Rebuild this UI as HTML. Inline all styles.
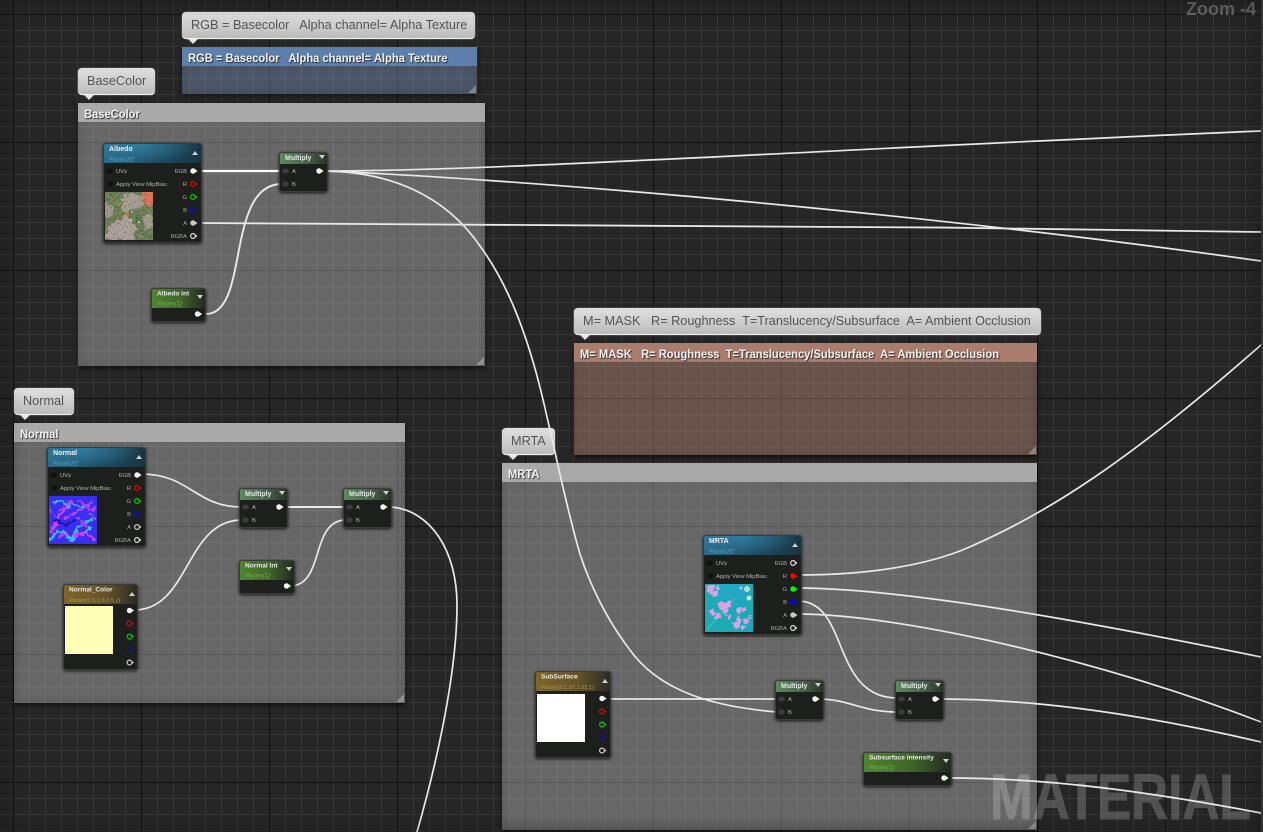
<!DOCTYPE html>
<html>
<head>
<meta charset="utf-8">
<style>
html,body{margin:0;padding:0;background:#262626}
#page{position:relative;width:1263px;height:832px;overflow:hidden;font-family:"Liberation Sans",sans-serif;
background-color:#262626;
background-image:
linear-gradient(to right,#131313 1px,transparent 1px),
linear-gradient(to bottom,#131313 1px,transparent 1px),
linear-gradient(to right,#353535 1px,transparent 1px),
linear-gradient(to bottom,#353535 1px,transparent 1px);
background-size:128px 128px,128px 128px,16px 16px,16px 16px;
background-position:13px 0,0 14px,13px 0,0 14px}
.c{position:absolute;box-sizing:border-box;z-index:1;box-shadow:0 2px 4px rgba(0,0,0,.65),inset 0 0 10px rgba(0,0,0,.15)}
.c .t{height:19px;padding:0 6px;font-weight:bold;font-size:12px;line-height:22px;color:#f2f2f2;text-shadow:1px 1px 1px #2c2c2c;white-space:pre;overflow:hidden}
.c .t span{display:inline-block;transform:scaleX(.93);transform-origin:0 50%}
.c i{position:absolute;right:1px;bottom:1px;width:0;height:0;border-left:8px solid transparent;border-bottom:8px solid rgba(255,255,255,.3)}
.gray{background:rgba(255,255,255,.3)}
.gray .t{background:#a9a9a9}
.b{position:absolute;box-sizing:border-box;z-index:1;height:27px;border-radius:4px;background:linear-gradient(#e0e0e0,#bcbcbc);border-bottom:1px solid #f4f4f4;box-shadow:0 0 1px #ddd;color:#545454;font-size:12.7px;line-height:26px;padding-left:9px;white-space:pre}
.b:after{content:"";position:absolute;left:6px;top:27px;width:0;height:0;border-left:5px solid transparent;border-right:5px solid transparent;border-top:5px solid #e4e4e4}
.n{position:absolute;box-sizing:border-box;z-index:3;background:#1d1f1d;border:1px solid #3a3c3a;border-radius:3px;box-shadow:0 1px 3px rgba(0,0,0,.8);overflow:hidden}
.h{height:19px;border-bottom:0}
.blue{background:radial-gradient(ellipse 70% 90% at 30% 10%,#2f7c9f,transparent),linear-gradient(90deg,#2a6a8a,#173440)}
.green{height:11px;background:linear-gradient(90deg,#5f8560,#4a684c 50%,#2b342b)}
.lime{background:linear-gradient(90deg,#4f8530,#3d6628 55%,#232823)}
.gold{background:linear-gradient(90deg,#7c6629,#665427 55%,#2c2b24)}
svg.o{position:absolute;left:0;top:0}
.w{position:absolute;z-index:5;font-weight:bold;white-space:pre;transform-origin:0 0}
#edge{position:absolute;inset:0;z-index:6;box-shadow:inset 0 0 22px rgba(0,0,0,.32);pointer-events:none}
#strip{position:absolute;left:1261px;top:0;width:2px;height:832px;background:#333;z-index:7}
</style>
</head>
<body>
<div id="page">

<!-- comment bubbles -->
<div class="b" style="left:182px;top:12px;width:293px">RGB = Basecolor   Alpha channel= Alpha Texture</div>
<div class="b" style="left:78px;top:68px;width:77px">BaseColor</div>
<div class="b" style="left:14px;top:388px;width:60px">Normal</div>
<div class="b" style="left:574px;top:308px;width:467px">M= MASK   R= Roughness  T=Translucency/Subsurface  A= Ambient Occlusion</div>
<div class="b" style="left:502px;top:428px;width:53px">MRTA</div>

<!-- comment boxes -->
<div class="c" style="left:182px;top:47px;width:295px;height:47px;background:rgba(158,198,255,.3)"><div class="t" style="background:#5d7fab"><span>RGB = Basecolor   Alpha channel= Alpha Texture</span></div><i></i></div>
<div class="c gray" style="left:78px;top:103px;width:407px;height:263px"><div class="t"><span>BaseColor</span></div><i></i></div>
<div class="c gray" style="left:14px;top:423px;width:391px;height:280px"><div class="t"><span>Normal</span></div><i></i></div>
<div class="c" style="left:574px;top:343px;width:463px;height:112px;background:rgba(255,188,160,.3)"><div class="t" style="background:#aa7c6c"><span>M= MASK   R= Roughness  T=Translucency/Subsurface  A= Ambient Occlusion</span></div><i></i></div>
<div class="c gray" style="left:502px;top:463px;width:535px;height:367px"><div class="t"><span>MRTA</span></div><i></i></div>

<!-- wires -->
<svg class="o" width="1263" height="832" style="z-index:2" fill="none" stroke="#e9e9e9" stroke-width="1.7" stroke-linecap="round">
<path d="M197 171L282 171" stroke-width="2.2" stroke="#fff"/>
<path d="M197 223C500 223,900 226,1261 232" stroke-width="1.8"/>
<path d="M206 314C250 314,225 184,282 184" stroke-width="1.9"/>
<path d="M325 171C500 171,850 148,1261 131"/>
<path d="M325 171C500 178,900 210,1261 261"/>
<path d="M325 171C390 172,445 195,480 246C505 280,528 330,547 417C556 455,567 510,580 554C590 585,607 620,630 650C660 692,715 707,778 712"/>
<path d="M141 474C190 474,195 507,242 507"/>
<path d="M134 610C190 610,185 520,242 520"/>
<path d="M287 507L346 507" stroke-width="2"/>
<path d="M290 586C325 586,310 520,346 520"/>
<path d="M391 507C430 510,457 550,457 605C457 680,432 780,417 832"/>
<path d="M797 575C860 575,915 568,960 551C1045 516,1130 460,1261 345"/>
<path d="M797 588C900 588,1080 620,1261 657"/>
<path d="M797 614C900 614,1100 660,1261 722"/>
<path d="M797 601C850 600,830 698,898 698"/>
<path d="M818 699C850 699,860 712,898 712"/>
<path d="M606 699L778 699"/>
<path d="M940 699C1040 699,1150 716,1261 742"/>
<path d="M948 778C1050 778,1150 792,1261 813"/>
</svg>

<!-- node bodies -->
<div class="n" style="left:103px;top:143px;width:99px;height:100px"><div class="h blue"></div></div>
<div class="n" style="left:47px;top:447px;width:99px;height:100px"><div class="h blue"></div></div>
<div class="n" style="left:703px;top:535px;width:99px;height:100px"><div class="h blue"></div></div>
<div class="n" style="left:279px;top:152px;width:49px;height:40px"><div class="h green"></div></div>
<div class="n" style="left:239px;top:488px;width:49px;height:40px"><div class="h green"></div></div>
<div class="n" style="left:343px;top:488px;width:49px;height:40px"><div class="h green"></div></div>
<div class="n" style="left:775px;top:680px;width:49px;height:40px"><div class="h green"></div></div>
<div class="n" style="left:895px;top:680px;width:49px;height:40px"><div class="h green"></div></div>
<div class="n" style="left:151px;top:288px;width:55px;height:34px"><div class="h lime"></div></div>
<div class="n" style="left:239px;top:560px;width:56px;height:34px"><div class="h lime"></div></div>
<div class="n" style="left:863px;top:752px;width:89px;height:34px"><div class="h lime"></div></div>
<div class="n" style="left:63px;top:584px;width:75px;height:86px"><div class="h gold"></div></div>
<div class="n" style="left:535px;top:671px;width:76px;height:87px"><div class="h gold"></div></div>

<!-- labels, pins, thumbnails -->
<svg class="o" width="1263" height="832" style="z-index:4;font-family:'Liberation Sans',sans-serif">
<defs>
<filter id="rough" x="0" y="0" width="100%" height="100%"><feTurbulence type="fractalNoise" baseFrequency=".22" numOctaves="2" seed="4"/><feDisplacementMap in="SourceGraphic" scale="7" xChannelSelector="R" yChannelSelector="G"/></filter>
<filter id="noise" x="0" y="0" width="100%" height="100%"><feTurbulence type="fractalNoise" baseFrequency=".55" numOctaves="2" seed="9"/><feColorMatrix values="1.6 0 0 0 -.3 1.6 0 0 0 -.3 1.6 0 0 0 -.3 0 0 0 0 1"/></filter>
<g id="pf"><circle r="2.7"/><path d="M2 -1.8L4.6 0L2 1.8Z"/></g>
<g id="po"><circle r="2.4" fill="none" stroke-width="1.2"/><path d="M2.6 -1.4L4.6 0L2.6 1.4Z" stroke="none"/></g>
<clipPath id="cl"><rect width="48" height="48"/></clipPath>
</defs>

<!-- swatches -->
<rect x="65" y="606" width="48" height="48" fill="#ffffb8"/>
<rect x="537" y="694" width="48" height="48" fill="#fff"/>

<!-- albedo thumbnail -->
<g transform="translate(105,192)" clip-path="url(#cl)">
<rect width="48" height="48" fill="#4a6632"/>
<g filter="url(#rough)">
<path d="M18 3L30 1L38 5L37 14L30 18L24 17L22 24L16 18Z" fill="#9c9080"/>
<path d="M6 32L16 27L22 22L28 30L32 36L28 42L30 48L0 48L2 38Z" fill="#a0958a"/>
<path d="M38 24L46 22L47 36L41 38Z" fill="#948c7e"/>
<path d="M-1 12L8 13L8 24L-1 24Z" fill="#928878"/>
<path d="M36 -2L50 -2L50 14L42 13L38 8Z" fill="#e25a36"/>
<path d="M10 8L16 9L15 14L9 13Z" fill="#5d7a3c"/>
<path d="M30 24L36 22L38 30L32 32Z" fill="#3e5c2a"/>
</g>
<rect width="48" height="48" filter="url(#noise)" opacity=".28"/>
<rect x="21" y="21" width="3" height="3" fill="#e2603a"/><rect x="12" y="25" width="2" height="2" fill="#c8683a"/><rect x="26" y="19" width="2" height="2" fill="#a8a08c"/><rect x="33" y="29" width="2" height="2" fill="#c8c0a8"/><rect x="7" y="6" width="2" height="2" fill="#d86038"/><rect x="42" y="18" width="3" height="2" fill="#d86038"/><rect x="34" y="43" width="3" height="3" fill="#d86a40"/><rect x="16" y="12" width="2" height="2" fill="#d86038"/><rect x="25" y="27" width="2" height="2" fill="#d0c8b0"/><rect x="14" y="20" width="2" height="1" fill="#c46a3c"/><rect x="36" y="19" width="2" height="2" fill="#c46a3c"/>
</g>

<!-- normal thumbnail -->
<g transform="translate(49,496)" clip-path="url(#cl)">
<rect width="48" height="48" fill="#3a2ff0"/>
<g filter="url(#rough)" fill="none" stroke-linecap="round">
<path d="M2 36L14 14L22 6" stroke="#d23ef0" stroke-width="3.5"/>
<path d="M0 44L10 34L24 44" stroke="#3cb8ff" stroke-width="3"/>
<path d="M22 46L30 30L42 24" stroke="#3cb8ff" stroke-width="2.5"/>
<path d="M16 22L28 16L44 6" stroke="#c040f0" stroke-width="2.5"/>
<path d="M26 40L36 36L46 44" stroke="#d83cf0" stroke-width="3"/>
<path d="M4 6L14 4L20 12" stroke="#38b8ff" stroke-width="2.5"/>
<path d="M30 4L40 14L47 12" stroke="#c43ef0" stroke-width="2.5"/>
<path d="M6 24L18 30L24 24" stroke="#2018b0" stroke-width="3"/>
<path d="M28 22L38 30" stroke="#a040f0" stroke-width="2.5"/>
<path d="M36 38L42 30" stroke="#48c8ff" stroke-width="2"/>
<path d="M0 14L8 22" stroke="#7a40f0" stroke-width="2.5"/>
<path d="M10 42L18 36" stroke="#d040f0" stroke-width="2"/>
<path d="M24 8L34 12" stroke="#40b0ff" stroke-width="2"/>
<path d="M40 18L46 22" stroke="#e040f0" stroke-width="2"/>
</g>
</g>

<!-- mrta thumbnail -->
<g transform="translate(705,584)" clip-path="url(#cl)">
<rect width="48" height="48" fill="#1caab8"/>
<rect x="14" y="0" width="26" height="16" fill="#22a8c4"/>
<path d="M2 46L20 24L30 14" stroke="#35c49a" stroke-width="1.5" fill="none"/>
<g filter="url(#rough)" fill="#d8a2e4">
<circle cx="5" cy="5" r="4"/><circle cx="13" cy="4" r="3"/><circle cx="10" cy="10" r="3"/>
<circle cx="18" cy="22" r="4.5"/><circle cx="24" cy="20" r="3"/><circle cx="21" cy="27" r="3"/>
<circle cx="7" cy="29" r="3"/><circle cx="13" cy="32" r="2"/><circle cx="34" cy="26" r="2.5"/><circle cx="39" cy="25" r="2"/>
<circle cx="31" cy="41" r="3.5"/><circle cx="34" cy="36" r="3"/><circle cx="42" cy="37" r="3"/><circle cx="24" cy="33" r="2.5"/>
<circle cx="38" cy="44" r="1.5"/><circle cx="45" cy="32" r="1.5"/>
</g>
<circle cx="42" cy="5" r="3" fill="#bfd8d0"/><circle cx="44" cy="14" r="2.5" fill="#c8e0d2"/><circle cx="36" cy="4" r="1.5" fill="#b0ccd8"/>
</g>

<!-- ALBEDO -->
<g transform="translate(103,143)">
<text x="6" y="8" font-size="7" font-weight="bold" fill="#f0f0f0">Albedo</text>
<text x="6" y="18.3" font-size="6" font-style="italic" fill="#5aa0bd">Param2D</text>
<path d="M89 12L92 8L95 12Z" fill="#cfcfcf"/>
<ellipse cx="7" cy="28" rx="3" ry="2.4" fill="#111"/><ellipse cx="7" cy="41" rx="3" ry="2.4" fill="#111"/>
<g font-size="5.8" fill="#b4b4b4"><text x="13" y="30">UVs</text><text x="13" y="43">Apply View MipBias</text></g>
<g font-size="5.8" fill="#a8a8a8" text-anchor="end"><text x="84" y="30">RGB</text><text x="84" y="43">R</text><text x="84" y="56">G</text><text x="84" y="69">B</text><text x="84" y="82">A</text><text x="84" y="95">RGBA</text></g>
<use href="#pf" x="90" y="28" fill="#fff"/>
<use href="#po" x="90" y="41" stroke="#e00" fill="#e00"/>
<use href="#po" x="90" y="54" stroke="#0c0" fill="#0c0"/>
<use href="#po" x="90" y="67" stroke="#11c" fill="#11c"/>
<use href="#pf" x="90" y="80" fill="#c8c8c8"/>
<use href="#po" x="90" y="93" stroke="#ddd" fill="#ddd"/>
</g>

<!-- NORMAL -->
<g transform="translate(47,447)">
<text x="6" y="8" font-size="7" font-weight="bold" fill="#f0f0f0">Normal</text>
<text x="6" y="18.3" font-size="6" font-style="italic" fill="#5aa0bd">Param2D</text>
<path d="M89 12L92 8L95 12Z" fill="#cfcfcf"/>
<ellipse cx="7" cy="28" rx="3" ry="2.4" fill="#111"/><ellipse cx="7" cy="41" rx="3" ry="2.4" fill="#111"/>
<g font-size="5.8" fill="#b4b4b4"><text x="13" y="30">UVs</text><text x="13" y="43">Apply View MipBias</text></g>
<g font-size="5.8" fill="#a8a8a8" text-anchor="end"><text x="84" y="30">RGB</text><text x="84" y="43">R</text><text x="84" y="56">G</text><text x="84" y="69">B</text><text x="84" y="82">A</text><text x="84" y="95">RGBA</text></g>
<use href="#pf" x="90" y="28" fill="#fff"/>
<use href="#po" x="90" y="41" stroke="#e00" fill="#e00"/>
<use href="#po" x="90" y="54" stroke="#0c0" fill="#0c0"/>
<use href="#po" x="90" y="67" stroke="#11c" fill="#11c"/>
<use href="#po" x="90" y="80" stroke="#ccc" fill="#ccc"/>
<use href="#po" x="90" y="93" stroke="#ddd" fill="#ddd"/>
</g>

<!-- MRTA -->
<g transform="translate(703,535)">
<text x="6" y="8" font-size="7" font-weight="bold" fill="#f0f0f0">MRTA</text>
<text x="6" y="18.3" font-size="6" font-style="italic" fill="#5aa0bd">Param2D</text>
<path d="M89 12L92 8L95 12Z" fill="#cfcfcf"/>
<ellipse cx="7" cy="28" rx="3" ry="2.4" fill="#111"/><ellipse cx="7" cy="41" rx="3" ry="2.4" fill="#111"/>
<g font-size="5.8" fill="#b4b4b4"><text x="13" y="30">UVs</text><text x="13" y="43">Apply View MipBias</text></g>
<g font-size="5.8" fill="#a8a8a8" text-anchor="end"><text x="84" y="30">RGB</text><text x="84" y="43">R</text><text x="84" y="56">G</text><text x="84" y="69">B</text><text x="84" y="82">A</text><text x="84" y="95">RGBA</text></g>
<use href="#po" x="90" y="28" stroke="#ddd" fill="#ddd"/>
<use href="#pf" x="90" y="41" fill="#f00"/>
<use href="#pf" x="90" y="54" fill="#0f0"/>
<use href="#pf" x="90" y="67" fill="#00e"/>
<use href="#pf" x="90" y="80" fill="#c8c8c8"/>
<use href="#po" x="90" y="93" stroke="#ddd" fill="#ddd"/>
</g>

<!-- MULTIPLY nodes -->
<g transform="translate(279,152)"><text x="6" y="8" font-size="7" font-weight="bold" fill="#e6e6e6">Multiply</text><path d="M40 3L46 3L43 7Z" fill="#cfcfcf"/><ellipse cx="6.5" cy="19" rx="3.3" ry="2.6" fill="#3c3c3c"/><ellipse cx="6.5" cy="32" rx="3.3" ry="2.6" fill="#3c3c3c"/><text x="13" y="21" font-size="5.8" fill="#b4b4b4">A</text><text x="13" y="34" font-size="5.8" fill="#b4b4b4">B</text><use href="#pf" x="40" y="19" fill="#fff"/></g>
<g transform="translate(239,488)"><text x="6" y="8" font-size="7" font-weight="bold" fill="#e6e6e6">Multiply</text><path d="M40 3L46 3L43 7Z" fill="#cfcfcf"/><ellipse cx="6.5" cy="19" rx="3.3" ry="2.6" fill="#3c3c3c"/><ellipse cx="6.5" cy="32" rx="3.3" ry="2.6" fill="#3c3c3c"/><text x="13" y="21" font-size="5.8" fill="#b4b4b4">A</text><text x="13" y="34" font-size="5.8" fill="#b4b4b4">B</text><use href="#pf" x="40" y="19" fill="#fff"/></g>
<g transform="translate(343,488)"><text x="6" y="8" font-size="7" font-weight="bold" fill="#e6e6e6">Multiply</text><path d="M40 3L46 3L43 7Z" fill="#cfcfcf"/><ellipse cx="6.5" cy="19" rx="3.3" ry="2.6" fill="#3c3c3c"/><ellipse cx="6.5" cy="32" rx="3.3" ry="2.6" fill="#3c3c3c"/><text x="13" y="21" font-size="5.8" fill="#b4b4b4">A</text><text x="13" y="34" font-size="5.8" fill="#b4b4b4">B</text><use href="#pf" x="40" y="19" fill="#fff"/></g>
<g transform="translate(775,680)"><text x="6" y="8" font-size="7" font-weight="bold" fill="#e6e6e6">Multiply</text><path d="M40 3L46 3L43 7Z" fill="#cfcfcf"/><ellipse cx="6.5" cy="19" rx="3.3" ry="2.6" fill="#3c3c3c"/><ellipse cx="6.5" cy="32" rx="3.3" ry="2.6" fill="#3c3c3c"/><text x="13" y="21" font-size="5.8" fill="#b4b4b4">A</text><text x="13" y="34" font-size="5.8" fill="#b4b4b4">B</text><use href="#pf" x="40" y="19" fill="#fff"/></g>
<g transform="translate(895,680)"><text x="6" y="8" font-size="7" font-weight="bold" fill="#e6e6e6">Multiply</text><path d="M40 3L46 3L43 7Z" fill="#cfcfcf"/><ellipse cx="6.5" cy="19" rx="3.3" ry="2.6" fill="#3c3c3c"/><ellipse cx="6.5" cy="32" rx="3.3" ry="2.6" fill="#3c3c3c"/><text x="13" y="21" font-size="5.8" fill="#b4b4b4">A</text><text x="13" y="34" font-size="5.8" fill="#b4b4b4">B</text><use href="#pf" x="40" y="19" fill="#fff"/></g>

<!-- scalar params -->
<g transform="translate(151,288)"><text x="6" y="7.5" font-size="6.6" font-weight="bold" fill="#e8e8e8">Albedo Int</text><text x="6" y="17.5" font-size="6" font-style="italic" fill="#78ae50">Param(1)</text><path d="M46 7L52 7L49 11Z" fill="#cfcfcf"/><use href="#pf" x="46.5" y="26" fill="#fff"/></g>
<g transform="translate(239,560)"><text x="6" y="7.5" font-size="6.6" font-weight="bold" fill="#e8e8e8">Normal Int</text><text x="6" y="17.5" font-size="6" font-style="italic" fill="#78ae50">Param(1)</text><path d="M47 7L53 7L50 11Z" fill="#cfcfcf"/><use href="#pf" x="47.5" y="26" fill="#fff"/></g>
<g transform="translate(863,752)"><text x="6" y="7.5" font-size="6.6" font-weight="bold" fill="#e8e8e8">Subsurface Intensity</text><text x="6" y="17.5" font-size="6" font-style="italic" fill="#78ae50">Param(1)</text><path d="M80 7L86 7L83 11Z" fill="#cfcfcf"/><use href="#pf" x="81" y="26" fill="#fff"/></g>

<!-- colour params -->
<g transform="translate(63,584)"><text x="6" y="7.5" font-size="6.6" font-weight="bold" fill="#e8e8e8">Normal_Color</text><text x="6" y="18" font-size="5.6" font-style="italic" fill="#a8945a">Param(1.5,1,5,0.5,1)</text><path d="M66 12L69 8L72 12Z" fill="#cfcfcf"/><use href="#pf" x="66.5" y="26.5" fill="#fff"/><use href="#po" x="66.5" y="39.5" stroke="#e00" fill="#e00"/><use href="#po" x="66.5" y="52.5" stroke="#0c0" fill="#0c0"/><use href="#po" x="66.5" y="65.5" stroke="#11c" fill="#11c"/><use href="#po" x="66.5" y="78.5" stroke="#ccc" fill="#ccc"/></g>
<g transform="translate(535,671)"><text x="6" y="7.5" font-size="6.6" font-weight="bold" fill="#e8e8e8">SubSurface</text><text x="6" y="18" font-size="5.6" font-style="italic" fill="#a8945a">Param(2,1.97,1.55,1)</text><path d="M67 12L70 8L73 12Z" fill="#cfcfcf"/><use href="#pf" x="67" y="27.5" fill="#fff"/><use href="#po" x="67" y="40.5" stroke="#e00" fill="#e00"/><use href="#po" x="67" y="53.5" stroke="#0c0" fill="#0c0"/><use href="#po" x="67" y="66.5" stroke="#11c" fill="#11c"/><use href="#po" x="67" y="79.5" stroke="#ccc" fill="#ccc"/></g>
</svg>

<!-- watermarks -->
<div class="w" style="left:1186px;top:-1px;font-size:18px;color:#636363">Zoom -4</div>
<div class="w" style="left:990px;top:760px;font-size:64px;line-height:74px;color:#fff;-webkit-text-stroke:1px #fff;opacity:.2;transform:scaleX(.8)">MATERIAL</div>

<div id="edge"></div>
<div id="strip"></div>
</div>
</body>
</html>
